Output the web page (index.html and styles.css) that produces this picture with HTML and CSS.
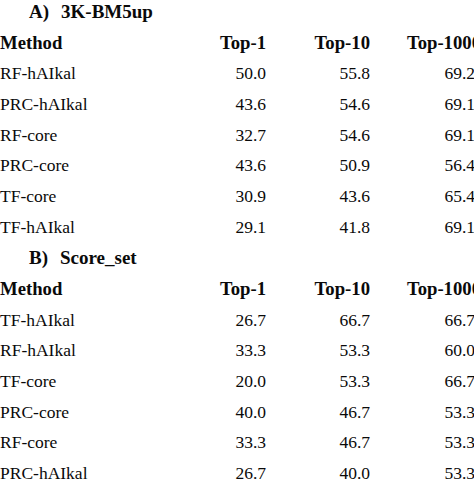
FILE: index.html
```html
<!DOCTYPE html>
<html>
<head>
<meta charset="utf-8">
<link rel="stylesheet" href="styles.css">
</head>
<body>
<div class="page">
  <div class="title"><span class="label">A)</span><span class="name">3K-BM5up</span></div>
  <div class="grid">
    <div class="hd m">Method</div><div class="hd n">Top-1</div><div class="hd n">Top-10</div><div class="hd n last">Top-1000</div>
    <div class="m">RF-hAIkal</div><div class="n">50.0</div><div class="n">55.8</div><div class="n">69.2</div>
    <div class="m">PRC-hAIkal</div><div class="n">43.6</div><div class="n">54.6</div><div class="n">69.1</div>
    <div class="m">RF-core</div><div class="n">32.7</div><div class="n">54.6</div><div class="n">69.1</div>
    <div class="m">PRC-core</div><div class="n">43.6</div><div class="n">50.9</div><div class="n">56.4</div>
    <div class="m">TF-core</div><div class="n">30.9</div><div class="n">43.6</div><div class="n">65.4</div>
    <div class="m">TF-hAIkal</div><div class="n">29.1</div><div class="n">41.8</div><div class="n">69.1</div>
  </div>
  <div class="title"><span class="label">B)</span><span class="name">Score_set</span></div>
  <div class="grid">
    <div class="hd m">Method</div><div class="hd n">Top-1</div><div class="hd n">Top-10</div><div class="hd n last">Top-1000</div>
    <div class="m">TF-hAIkal</div><div class="n">26.7</div><div class="n">66.7</div><div class="n">66.7</div>
    <div class="m">RF-hAIkal</div><div class="n">33.3</div><div class="n">53.3</div><div class="n">60.0</div>
    <div class="m">TF-core</div><div class="n">20.0</div><div class="n">53.3</div><div class="n">66.7</div>
    <div class="m">PRC-core</div><div class="n">40.0</div><div class="n">46.7</div><div class="n">53.3</div>
    <div class="m">RF-core</div><div class="n">33.3</div><div class="n">46.7</div><div class="n">53.3</div>
    <div class="m">PRC-hAIkal</div><div class="n">26.7</div><div class="n">40.0</div><div class="n">53.3</div>
  </div>
</div>
</body>
</html>
```
FILE: styles.css
```css
html, body {
  margin: 0;
  padding: 0;
  background: #ffffff;
  overflow: hidden;
}
body {
  width: 474px;
  height: 482px;
  font-family: "Liberation Serif", "Times New Roman", serif;
  color: #0a0a0a;
}
.page {
  margin-top: -4px;
}
.title {
  height: 31.5px;
  line-height: 31.5px;
  font-weight: bold;
  font-size: 19px;
  padding-left: 29px;
  white-space: nowrap;
}
.title .name {
  margin-left: 12px;
}
.grid {
  display: grid;
  grid-template-columns: 200px 66px 104px 105px;
  grid-auto-rows: 30.7px;
  line-height: 30.7px;
  font-size: 17.5px;
  white-space: nowrap;
}
.hd {
  font-weight: bold;
  font-size: 18.7px;
}
.m {
  text-align: left;
}
.n {
  text-align: right;
}
.hd.last {
  margin-right: -6px;
}
```
